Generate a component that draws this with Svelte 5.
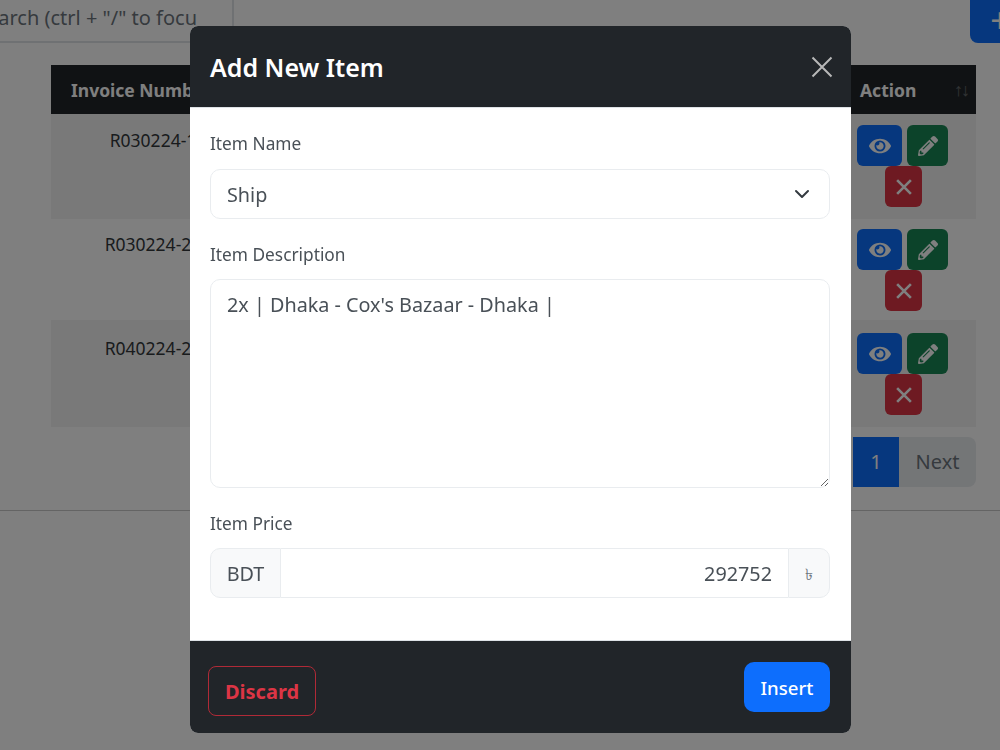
<script>
  let rows = [
    { invoice: "R030224-1", pad: "one" },
    { invoice: "R030224-20", pad: "two" },
    { invoice: "R040224-20", pad: "three" },
  ];
  let itemName = "Ship";
  let description = "2x | Dhaka - Cox's Bazaar - Dhaka | ";
  let price = "292752";
</script>

<div class="page">
  <div class="topbar">
    <div class="search"><div class="clip"><span>Search (ctrl + "/" to focus)</span></div></div>
    <button class="plus">+</button>
  </div>

  <table>
    <thead>
      <tr>
        <th class="inv">Invoice Number</th>
        <th class="mid"></th>
        <th class="act">Action <span class="sort">↑↓</span></th>
      </tr>
    </thead>
    <tbody>
      {#each rows as row}
        <tr class={row.pad}>
          <td class="inv">{row.invoice}</td>
          <td class="mid"></td>
          <td class="act">
            <div class="btns">
              <button class="b view" aria-label="view">
                <svg viewBox="0 0 576 512" width="22" height="20"><path fill="currentColor" d="M572.52 241.4C518.29 135.59 410.93 64 288 64S57.68 135.64 3.48 241.41a32.35 32.35 0 0 0 0 29.19C57.71 376.41 165.07 448 288 448s230.32-71.64 284.52-177.41a32.35 32.35 0 0 0 0-29.19zM288 400a144 144 0 1 1 144-144 143.93 143.93 0 0 1-144 144zm0-240a95.31 95.31 0 0 0-25.31 3.79 47.85 47.85 0 0 1-66.9 66.9A95.78 95.78 0 1 0 288 160z"/></svg>
              </button>
              <button class="b edit" aria-label="edit">
                <svg viewBox="0 0 512 512" width="20" height="20"><path fill="currentColor" d="M497.9 142.1l-46.1 46.1c-4.7 4.7-12.3 4.7-17 0l-111-111c-4.7-4.7-4.7-12.3 0-17l46.1-46.1c18.7-18.7 49.1-18.7 67.9 0l60.1 60.1c18.8 18.7 18.8 49.1 0 67.9zM284.2 99.8L21.6 362.4.4 483.9c-2.9 16.4 11.4 30.6 27.8 27.8l121.5-21.3 262.6-262.6c4.7-4.7 4.7-12.3 0-17l-111-111c-4.8-4.7-12.4-4.7-17.1 0zM124.1 339.9c-5.5-5.5-5.5-14.3 0-19.8l154-154c5.5-5.5 14.3-5.5 19.8 0s5.5 14.3 0 19.8l-154 154c-5.5 5.5-14.3 5.5-19.8 0zM88 424h48v36.3l-64.5 11.3-31.1-31.1L51.7 376H88v48z"/></svg>
              </button>
              <button class="b del" aria-label="delete">
                <svg viewBox="0 0 16 16" width="20" height="20"><path d="M2.5 2.5l11 11M13.5 2.5l-11 11" stroke="currentColor" stroke-width="2.1" fill="none"/></svg>
              </button>
            </div>
          </td>
        </tr>
      {/each}
    </tbody>
  </table>

  <div class="pager">
    <span class="cur">1</span>
    <span class="next">Next</span>
  </div>
  <hr />
</div>

<div class="backdrop"></div>

<div class="modal">
  <header>
    <h2>Add New Item</h2>
    <button class="close" aria-label="close">
      <svg viewBox="0 0 22 22" width="22" height="22"><path d="M1.5 1.5l19 19M20.5 1.5l-19 19" stroke="currentColor" stroke-width="2" fill="none"/></svg>
    </button>
  </header>

  <div class="body">
    <label class="first" for="name">Item Name</label>
    <div class="select-wrap">
      <select id="name" bind:value={itemName}>
        <option>Ship</option>
        <option>Flight</option>
      </select>
      <svg class="chev" viewBox="0 0 16 16" width="16" height="16"><path d="M2 5l6 6 6-6" stroke="#343a40" stroke-width="2" stroke-linecap="round" stroke-linejoin="round" fill="none"/></svg>
    </div>

    <label for="desc">Item Description</label>
    <textarea id="desc" bind:value={description}></textarea>

    <label for="price">Item Price</label>
    <div class="group">
      <span class="addon left">BDT</span>
      <input id="price" bind:value={price} />
      <span class="addon right">৳</span>
    </div>
  </div>

  <footer>
    <button class="discard">Discard</button>
    <button class="insert">Insert</button>
  </footer>
</div>

<style>
  :global(body) {
    margin: 0;
    background: #fff;
    overflow: hidden;
    font-family: "Noto Sans", "Open Sans", sans-serif;
    color: #212529;
  }
  .page {
    height: 750px;
    overflow: hidden;
  }
  .topbar {
    display: flex;
    justify-content: space-between;
    height: 43px;
  }
  .search {
    width: 197px;
    padding-right: 35px;
    height: 41px;
    border-right: 2px solid #dee2e6;
    border-bottom: 2px solid #dee2e6;
    font-size: 20px;
    line-height: 36px;
    color: #6c757d;
    white-space: nowrap;
  }
  .clip {
    overflow: hidden;
  }
  .clip span {
    display: block;
    margin-left: -24px;
  }
  .plus {
    flex: none;
    width: 60px;
    height: 53px;
    margin: -10px -30px 0 0;
    padding: 6px 0 0;
    border: 0;
    border-radius: 8px;
    background: #0d6efd;
    color: #fff;
    font-size: 34px;
    line-height: 1;
    font-family: inherit;
  }
  table {
    width: 925px;
    margin: 22px 0 0 51px;
    border-collapse: collapse;
    table-layout: fixed;
    font-size: 17.5px;
  }
  th {
    height: 49px;
    padding: 1px 0 0;
    background: #212529;
    color: #fff;
    font-weight: 700;
    text-align: left;
    white-space: nowrap;
    overflow: hidden;
    box-sizing: border-box;
  }
  th.inv {
    padding-left: 20px;
  }
  th.act {
    padding-left: 9px;
    position: relative;
  }
  .sort {
    position: absolute;
    right: 8px;
    top: 12px;
    font-size: 18px;
    font-weight: 400;
    letter-spacing: -2px;
    opacity: 0.3;
  }
  .inv {
    width: 210px;
  }
  .act {
    width: 125px;
  }
  td {
    padding: 0;
    vertical-align: top;
  }
  td.inv {
    text-align: center;
    line-height: 30px;
    color: #33373b;
  }
  tr.one td {
    height: 105px;
    padding-top: 11px;
    box-sizing: border-box;
    background: #f2f2f2;
  }
  tr.two td {
    height: 101px;
    padding-top: 10px;
    box-sizing: border-box;
    background: #fff;
  }
  tr.three td {
    height: 107px;
    padding-top: 13px;
    box-sizing: border-box;
    background: #f2f2f2;
  }
  tr td.inv {
    padding-right: 6px;
  }
  .btns {
    display: flex;
    flex-wrap: wrap;
    justify-content: center;
    column-gap: 5px;
    width: 91px;
    margin-left: 6px;
  }
  .b {
    height: 41px;
    padding: 0;
    border: 0;
    border-radius: 6px;
    color: #fff;
    display: flex;
    align-items: center;
    justify-content: center;
  }
  .view {
    width: 45px;
    background: #0d6efd;
  }
  .edit {
    width: 41px;
    background: #198754;
  }
  .del {
    width: 37px;
    margin-left: 2px;
    background: #dc3545;
  }
  .pager {
    display: flex;
    justify-content: flex-end;
    height: 50px;
    margin: 10px 24px 0 0;
    font-size: 20px;
    line-height: 50px;
  }
  .cur {
    width: 46px;
    text-align: center;
    background: #0d6efd;
    color: #fff;
  }
  .next {
    width: 77px;
    text-align: center;
    background: #e9ecef;
    color: #6c757d;
    border-radius: 0 8px 8px 0;
  }
  hr {
    margin: 23px 0 0;
    border: 0;
    border-top: 1px solid #c8c8c8;
  }
  .backdrop {
    position: fixed;
    inset: 0;
    background: rgba(0, 0, 0, 0.5);
  }
  .modal {
    position: fixed;
    left: 190px;
    top: 26px;
    width: 661px;
    height: 707px;
    display: flex;
    flex-direction: column;
    border-radius: 8px;
    overflow: hidden;
    background: #fff;
  }
  header {
    flex: none;
    height: 82px;
    box-sizing: border-box;
    display: flex;
    align-items: center;
    justify-content: space-between;
    padding: 0 18px 0 20px;
    background: #212529;
    border-bottom: 1px solid #dee2e6;
  }
  h2 {
    margin: 0;
    font-size: 25px;
    font-weight: 600;
    color: #fff;
  }
  .close {
    padding: 0;
    border: 0;
    background: none;
    color: #b8b8b8;
    display: flex;
  }
  .body {
    flex: 1;
    padding: 24px 21px 0 20px;
    display: flex;
    flex-direction: column;
  }
  label {
    display: block;
    height: 24px;
    line-height: 24px;
    margin-bottom: 12px;
    font-size: 17.3px;
    color: #495057;
  }
  label.first {
    margin-bottom: 13px;
  }
  select,
  textarea,
  input {
    box-sizing: border-box;
    width: 100%;
    margin: 0;
    font-family: inherit;
    font-size: 19.8px;
    color: #495057;
    background: #fff;
    border: 1px solid #e9ecef;
    outline: none;
  }
  .select-wrap {
    position: relative;
    margin-bottom: 24px;
  }
  select {
    display: block;
    height: 50px;
    padding: 0 16px;
    border-radius: 10px;
    appearance: none;
  }
  .chev {
    position: absolute;
    right: 20px;
    top: 17px;
  }
  textarea {
    display: block;
    height: 209px;
    padding: 11px 16px;
    margin-bottom: 24px;
    border-radius: 10px;
    resize: vertical;
  }
  .group {
    display: flex;
    height: 50px;
  }
  .group input {
    flex: 1;
    min-width: 0;
    height: 50px;
    padding: 0 16px;
    text-align: right;
    border-left: 0;
    border-right: 0;
  }
  .addon {
    box-sizing: border-box;
    background: #f8f9fa;
    border: 1px solid #e9ecef;
    color: #495057;
    font-size: 19.8px;
    line-height: 50px;
    text-align: center;
  }
  .addon.left {
    width: 71px;
    border-radius: 10px 0 0 10px;
  }
  .addon.right {
    width: 42px;
    border-radius: 0 10px 10px 0;
    font-size: 16px;
    color: #6c757d;
  }
  footer {
    flex: none;
    height: 93px;
    box-sizing: border-box;
    display: flex;
    justify-content: space-between;
    align-items: flex-start;
    padding: 0 21px 0 18px;
    background: #212529;
    border-top: 1px solid #dee2e6;
    font-family: inherit;
  }
  footer button {
    height: 50px;
    font-family: inherit;
  }
  .discard {
    width: 108px;
    margin-top: 25px;
    border: 1.5px solid #b02a37;
    border-radius: 8px;
    background: none;
    color: #dc3545;
    font-size: 20px;
    font-weight: 700;
  }
  .insert {
    width: 86px;
    margin-top: 21px;
    border: 0;
    border-radius: 10px;
    background: #0d6efd;
    color: #fff;
    font-size: 18.6px;
    font-weight: 500;
  }
</style>
